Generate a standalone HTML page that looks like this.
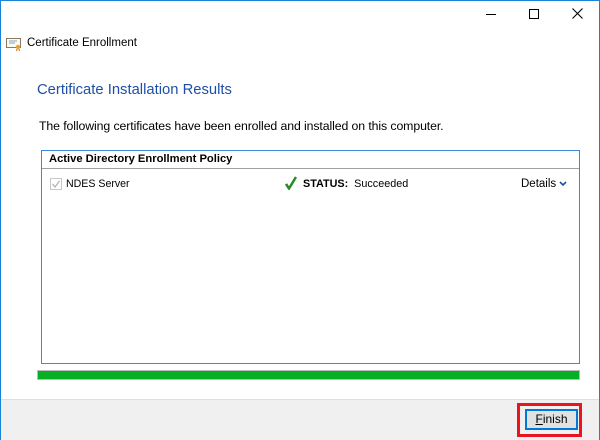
<!DOCTYPE html>
<html><head><meta charset="utf-8"><style>
body{margin:0;width:600px;height:440px;overflow:hidden;font-family:"Liberation Sans",sans-serif;background:#fff;position:relative}
.win{position:absolute;left:0;top:0;width:598px;height:438px;border:1px solid #1883d7;background:#fff}
.a{position:absolute;white-space:nowrap}
</style></head><body>
<div class="win"></div>
<div class="a" style="left:486px;top:14px;width:10px;height:1px;background:#000"></div>
<div class="a" style="left:529px;top:9px;width:8px;height:8px;border:1px solid #000"></div>
<svg class="a" style="left:572px;top:8px" width="11" height="11"><path d="M0.5 0.5L10.5 10.5M10.5 0.5L0.5 10.5" stroke="#000" stroke-width="1.1"/></svg>
<svg class="a" style="left:6px;top:37px" width="16" height="14"><rect x="0.5" y="1.5" width="14" height="9" fill="#fdfbef" stroke="#8a7a5a"/><path d="M3 4h8M3 6h6" stroke="#7aa0d0"/><circle cx="12" cy="10" r="2.2" fill="#e8a030"/><path d="M11 12l-0.5 2M13 12l0.5 2" stroke="#c07020"/></svg>
<div class="a" style="left:27px;top:37px;font-size:11.5px;color:#000">Certificate Enrollment</div>
<div class="a" style="left:37px;top:82px;font-size:14.8px;color:#1e4fa8">Certificate Installation Results</div>
<div class="a" style="left:39px;top:119px;font-size:12.3px;letter-spacing:-0.1px;color:#000">The following certificates have been enrolled and installed on this computer.</div>
<div class="a" style="left:41px;top:150px;width:537px;height:212px;border:1px solid #3c8ad8"></div>
<div class="a" style="left:42px;top:168px;width:537px;height:1px;background:#a0a0a0"></div>
<div class="a" style="left:49px;top:153px;font-size:11.2px;font-weight:bold;color:#000">Active Directory Enrollment Policy</div>
<div class="a" style="left:50px;top:178px;width:10px;height:10px;border:1px solid #c8c8c8"></div>
<svg class="a" style="left:51px;top:179px" width="10" height="10"><path d="M1.5 5l2.5 3 4.5-6" fill="none" stroke="#b0b0b0" stroke-width="1.2"/></svg>
<div class="a" style="left:66px;top:178px;font-size:10.6px;color:#000">NDES Server</div>
<svg class="a" style="left:285px;top:176px" width="12" height="14"><path d="M1 8l3 4.5L11 1" fill="none" stroke="#2a8a2a" stroke-width="2.5"/></svg>
<div class="a" style="left:303px;top:178px;font-size:10.8px;color:#000"><b>STATUS:</b>&nbsp; Succeeded</div>
<div class="a" style="left:521px;top:178px;font-size:11.5px;color:#000">Details</div>
<svg class="a" style="left:559px;top:181px" width="8" height="6"><path d="M1 1l3 3 3-3" fill="none" stroke="#1e4fa8" stroke-width="1.6"/></svg>
<div class="a" style="left:37px;top:370px;width:543px;height:10px;background:#06b025;border:1px solid #bcbcbc;box-sizing:border-box"></div>
<div class="a" style="left:1px;top:399px;width:598px;height:40px;background:#f0f0f0;border-top:1px solid #dfdfdf"></div>
<div class="a" style="left:517px;top:403px;width:65px;height:34px;box-sizing:border-box;border:3px solid #e8151f"></div>
<div class="a" style="left:525px;top:409px;width:53px;height:21px;box-sizing:border-box;border:1px solid #0078d7;background:#e1e1e1;box-shadow:inset 0 0 0 1px #0078d7;font-size:12px;text-align:center;line-height:19px"><u>F</u>inish</div>
</body></html>
